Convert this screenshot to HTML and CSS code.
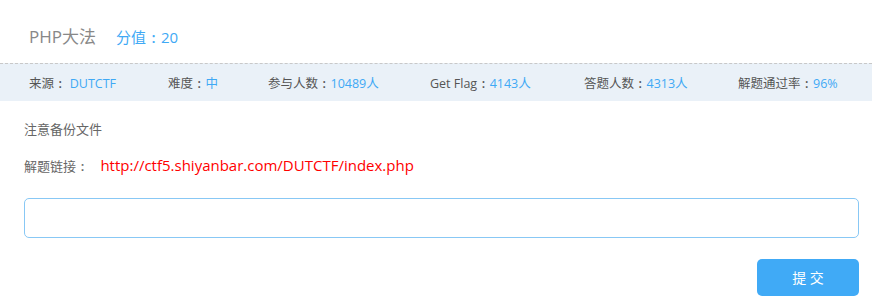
FILE: index.html
```html
<!DOCTYPE html>
<html lang="zh-CN">
<head>
    <meta charset="UTF-8">
    <title>PHP大法</title>
    <link rel="stylesheet" href="styles.css">
</head>
<body>
    <div class="head">
        <span class="name">PHP大法</span>
        <span class="score">分值<span class="colon">:</span>20</span>
    </div>
    <div class="info">
        <div class="item item-src">来源<span class="colon">:</span> <span class="val">DUTCTF</span></div>
        <div class="item item-level">难度<span class="colon">:</span><span class="val">中</span></div>
        <div class="item item-join">参与人数<span class="colon">:</span><span class="val">10489人</span></div>
        <div class="item item-flag">Get Flag<span class="colon">:</span><span class="val">4143人</span></div>
        <div class="item item-answer">答题人数<span class="colon">:</span><span class="val">4313人</span></div>
        <div class="item">解题通过率<span class="colon">:</span><span class="val">96%</span></div>
    </div>
    <div class="content">
        <div class="desc">注意备份文件</div>
        <div class="link">解题链接<span class="colon">:</span> <a href="#">http://ctf5.shiyanbar.com/DUTCTF/index.php</a></div>
        <input class="answer" type="text">
        <div class="submit-row">
            <div class="submit">提 交</div>
        </div>
    </div>
</body>
</html>
```

FILE: styles.css
```css
body{
    margin:0;
    font-family: "Open Sans", "Noto Sans CJK SC", sans-serif;
    color:#666;
    background:#fff;
}
/* 全角冒号，居中 */
.colon{
    display: inline-block;
    width: 1em;
    text-align: center;
    font-weight: 600;
}
.head{
    height: 63px;
    box-sizing: border-box;
    padding: 23px 0 0 29px;
    display: flex;
    align-items: baseline;
}
.head .name{
    font-size: 17px;
    color: #888;
}
.head .score{
    font-size: 15px;
    color: #3fa9f5;
    margin-left: 20px;
}
.info{
    height: 38px;
    box-sizing: border-box;
    border-top: 1px dashed #c8c8c8;
    background-color: #eaf1f8;
    display: flex;
    align-items: center;
    padding-left: 29px;
    font-size: 12.5px;
    color: #555;
}
.item{
    white-space: nowrap;
}
.item .val{
    color: #3fa9f5;
}
.item-src{ width: 139px; }
.item-level{ width: 100px; }
.item-join{ width: 162px; }
.item-flag{ width: 154px; }
.item-answer{ width: 154px; }
.content{
    padding: 18px 13px 0 24px;
}
.desc{
    font-size: 13px;
    color: #666;
    height: 20px;
    line-height: 20px;
}
.link{
    margin-top: 16px;
    font-size: 13px;
    color: #666;
    line-height: 20px;
}
.link a{
    color: #ff0000;
    font-size: 15px;
    text-decoration: none;
    margin-left: 8px;
}
.answer{
    display: block;
    width: 100%;
    box-sizing: border-box;
    height: 40px;
    margin-top: 22px;
    border: 1.5px solid #88c8f5;
    border-radius: 5px;
    outline: none;
}
.submit-row{
    display: flex;
    justify-content: flex-end;
    margin-top: 21px;
}
.submit{
    width: 102px;
    height: 37px;
    line-height: 37px;
    text-align: center;
    background-color: #40aaf6;
    color: #fff;
    font-size: 14px;
    border-radius: 5px;
    cursor: pointer;
}
```
